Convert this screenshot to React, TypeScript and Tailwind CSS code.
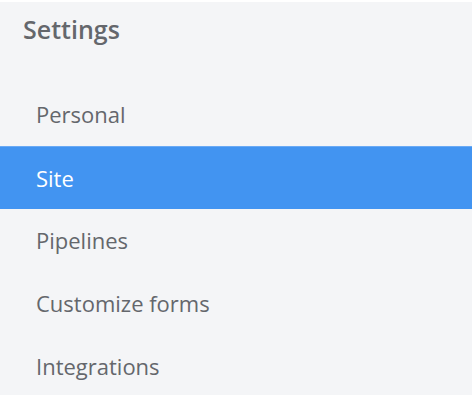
import React from "react";

const items = ["Personal", "Site", "Pipelines", "Customize forms", "Integrations"];

const App = () => {
  return (
    <div className="h-[397px] w-[474px] overflow-hidden bg-white pt-[2px] pr-[2px] font-['Open_Sans',sans-serif]">
      <aside className="h-[393px] bg-[#f4f5f7]">
        <h1 className="pl-[23px] pt-[11px] text-[25px] leading-[32px] font-semibold text-[#64676c]">
          Settings
        </h1>
        <ul className="mt-[38px]">
          {items.map((item) => (
            <li
              key={item}
              className={
                item === "Site"
                  ? "flex h-[63px] items-center border-t border-[#6aaaf5] bg-[#4294f1] pl-[36px] text-[22px] text-white"
                  : "flex h-[63px] items-center pl-[36px] text-[22px] text-[#64676c]"
              }
            >
              {item}
            </li>
          ))}
        </ul>
      </aside>
    </div>
  );
};

export default App;
